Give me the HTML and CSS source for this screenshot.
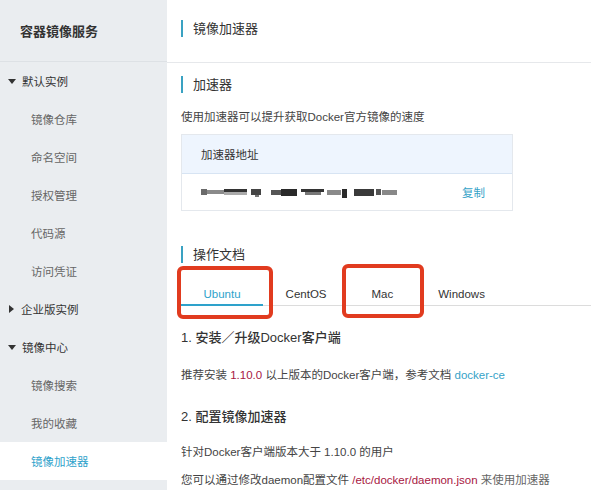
FILE: index.html
```html
<!DOCTYPE html>
<html lang="zh-CN">
<head>
<meta charset="utf-8">
<title>镜像加速器</title>
<link rel="stylesheet" href="styles.css">
</head>
<body>
<div class="app">
  <aside class="sidebar">
    <div class="side-head">容器镜像服务</div>
    <ul class="menu">
      <li class="group"><span class="caret down"></span>默认实例</li>
      <li class="item">镜像仓库</li>
      <li class="item">命名空间</li>
      <li class="item">授权管理</li>
      <li class="item">代码源</li>
      <li class="item">访问凭证</li>
      <li class="group"><span class="caret right"></span>企业版实例</li>
      <li class="group"><span class="caret down"></span>镜像中心</li>
      <li class="item">镜像搜索</li>
      <li class="item">我的收藏</li>
      <li class="item active">镜像加速器</li>
    </ul>
  </aside>
  <main class="content">
    <header class="page-head">
      <h1 class="bar-title">镜像加速器</h1>
    </header>
    <div class="body">
      <h2 class="bar-title sec-first">加速器</h2>
      <p class="desc">使用加速器可以提升获取Docker官方镜像的速度</p>
      <div class="tbl">
        <div class="tbl-head">加速器地址</div>
        <div class="tbl-row">
          <svg class="masked" width="196" height="12" viewBox="0 0 196 12">
            <rect x="0" y="3" width="6" height="6" fill="#6a6a6a"/>
            <rect x="6" y="4" width="17" height="4" fill="#8a8a8a"/>
            <rect x="23" y="3" width="23" height="3" fill="#333"/>
            <rect x="23" y="6" width="23" height="3" fill="#aaa"/>
            <rect x="50" y="3" width="10" height="6" fill="#444"/>
            <rect x="54" y="9" width="4" height="2" fill="#777"/>
            <rect x="70" y="4" width="10" height="5" fill="#555"/>
            <rect x="80" y="3" width="16" height="7" fill="#2a2a2a"/>
            <rect x="100" y="3" width="23" height="3" fill="#333"/>
            <rect x="104" y="6" width="16" height="3" fill="#777"/>
            <rect x="126" y="4" width="14" height="5" fill="#8a8a8a"/>
            <rect x="141" y="3" width="5" height="9" fill="#2a2a2a"/>
            <rect x="153" y="3" width="20" height="7" fill="#3a3a3a"/>
            <rect x="175" y="3" width="5" height="6" fill="#555"/>
            <rect x="181" y="4" width="15" height="5" fill="#888"/>
          </svg>
          <span class="link">复制</span>
        </div>
      </div>

      <h2 class="bar-title sec-docs">操作文档</h2>
      <div class="tabs">
        <span class="tab active">Ubuntu</span>
        <span class="tab">CentOS</span>
        <span class="tab">Mac</span>
        <span class="tab">Windows</span>
        <span class="mark mark-1"></span>
        <span class="mark mark-2"></span>
      </div>

      <h3 class="step step-1">1. 安装／升级Docker客户端</h3>
      <p class="para p-1">推荐安装 <span class="code">1.10.0</span> 以上版本的Docker客户端，参考文档 <span class="link">docker-ce</span></p>
      <h3 class="step step-2">2. 配置镜像加速器</h3>
      <p class="para p-2">针对Docker客户端版本大于 1.10.0 的用户</p>
      <p class="para p-3">您可以通过修改daemon配置文件 <span class="code">/etc/docker/daemon.json</span> <span class="faded">来使用加速器</span></p>
    </div>
  </main>
</div>
</body>
</html>
```

FILE: styles.css
```css
* {
  box-sizing: border-box;
  margin: 0;
  padding: 0;
}

html, body {
  width: 601px;
  height: 490px;
  overflow: hidden;
}

body {
  font-family: "Liberation Sans", "Noto Sans CJK SC", sans-serif;
  font-size: 11.5px;
  color: #333;
  background: #fff;
}

.app {
  display: flex;
  height: 490px;
}

/* Sidebar */
.sidebar {
  width: 167px;
  flex: none;
  background: #eaedf0;
}

.side-head {
  height: 62px;
  border-bottom: 1px solid #dde1e5;
  padding-left: 20px;
  display: flex;
  align-items: center;
  font-size: 13px;
  font-weight: 700;
  color: #333;
}

.menu {
  list-style: none;
}

.menu li {
  height: 38px;
  display: flex;
  align-items: center;
}

.group {
  padding-left: 8px;
  color: #333;
}

.caret {
  width: 0;
  height: 0;
  margin-right: 6px;
}

.caret.down {
  border-left: 4px solid transparent;
  border-right: 4px solid transparent;
  border-top: 5px solid #333;
}

.caret.right {
  margin-left: 1px;
  margin-right: 7px;
  border-top: 4px solid transparent;
  border-bottom: 4px solid transparent;
  border-left: 5px solid #333;
}

.item {
  padding-left: 31px;
  color: #666;
}

.item.active {
  background: #fff;
  color: #2ea2cb;
}

/* Content */
.content {
  flex: 1;
  margin-right: 10px;
  min-width: 0;
}

.page-head {
  height: 63px;
  border-bottom: 1px solid #e6e8eb;
  padding: 20px 0 0 14px;
}

.body {
  padding-left: 14px;
}

.bar-title {
  border-left: 2px solid #3aa2c2;
  padding-left: 10px;
  line-height: 17px;
  font-size: 13px;
  font-weight: 400;
  color: #333;
}

.sec-first {
  margin-top: 13px;
}

.desc {
  margin-top: 15px;
  line-height: 18px;
  color: #444;
}

.tbl {
  margin-top: 8px;
  width: 332px;
  border: 1px solid #e4e8ed;
}

.tbl-head {
  height: 39px;
  background: #eef5fe;
  border-bottom: 1px solid #d7e4f3;
  padding-left: 19px;
  display: flex;
  align-items: center;
  color: #333;
}

.tbl-row {
  height: 36px;
  padding: 0 27px 0 19px;
  display: flex;
  align-items: center;
  justify-content: space-between;
}

.masked {
  display: block;
  filter: blur(0.7px);
}

.link {
  color: #36a3c8;
}

.sec-docs {
  margin-top: 35px;
}

.tabs {
  position: relative;
  margin-top: 10px;
  display: flex;
  border-bottom: 1px solid #dcdcdc;
}

.tab {
  padding: 12px 22.5px 1px;
  line-height: 18px;
  margin-bottom: -1px;
  border-bottom: 2px solid transparent;
  color: #333;
}

.tab.active {
  color: #2ea2cb;
  border-bottom-color: #2ea2cb;
}

.mark {
  position: absolute;
  border: 4px solid #e13b1f;
  border-radius: 6px;
}

.mark-1 {
  left: -4px;
  top: -7px;
  width: 96px;
  height: 53px;
}

.mark-2 {
  left: 161px;
  top: -9px;
  width: 82px;
  height: 54px;
}

.step {
  font-size: 13px;
  font-weight: 500;
  line-height: 18px;
  color: #333;
}

.step-1 {
  margin-top: 23px;
}

.step-2 {
  margin-top: 24px;
}

.para {
  line-height: 18px;
  color: #444;
  white-space: nowrap;
}

.p-1 {
  margin-top: 19px;
}

.p-2 {
  margin-top: 17px;
}

.p-3 {
  margin-top: 10px;
}

.code {
  color: #a8173f;
}

.faded {
  color: #666;
}
```
